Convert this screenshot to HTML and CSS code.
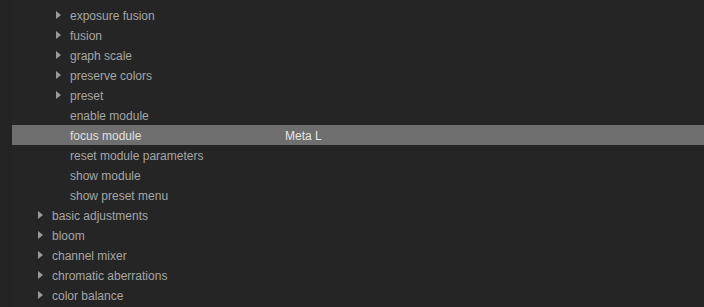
FILE: index.html
```html
<!DOCTYPE html>
<html>
<head>
<meta charset="utf-8">
<link rel="stylesheet" href="styles.css">
</head>
<body>
<div class="page">
  <div class="gutter"></div>
  <div class="tree">
    <div class="row l2"><span class="arrow"></span><span class="label">exposure fusion</span></div>
    <div class="row l2"><span class="arrow"></span><span class="label">fusion</span></div>
    <div class="row l2"><span class="arrow"></span><span class="label">graph scale</span></div>
    <div class="row l2"><span class="arrow"></span><span class="label">preserve colors</span></div>
    <div class="row l2"><span class="arrow"></span><span class="label">preset</span></div>
    <div class="row l2"><span class="noarrow"></span><span class="label">enable module</span></div>
    <div class="row l2 selected"><span class="noarrow"></span><span class="label">focus module</span><span class="key">Meta L</span></div>
    <div class="row l2"><span class="noarrow"></span><span class="label">reset module parameters</span></div>
    <div class="row l2"><span class="noarrow"></span><span class="label">show module</span></div>
    <div class="row l2"><span class="noarrow"></span><span class="label">show preset menu</span></div>
    <div class="row l1"><span class="arrow"></span><span class="label">basic adjustments</span></div>
    <div class="row l1"><span class="arrow"></span><span class="label">bloom</span></div>
    <div class="row l1"><span class="arrow"></span><span class="label">channel mixer</span></div>
    <div class="row l1"><span class="arrow"></span><span class="label">chromatic aberrations</span></div>
    <div class="row l1"><span class="arrow"></span><span class="label">color balance</span></div>
  </div>
</div>
</body>
</html>
```
FILE: styles.css
```css
html, body {
  margin: 0;
  padding: 0;
  background: #252525;
  height: 100%;
  overflow: hidden;
}
.page {
  display: flex;
  height: 307px;
  font-family: "Liberation Sans", Arial, sans-serif;
  font-size: 12px;
}
.gutter {
  width: 12px;
  background: #232323;
  flex: none;
}
.tree {
  flex: 1;
  padding-top: 5px;
}
.row {
  height: 20px;
  line-height: 20px;
  display: flex;
  align-items: center;
  color: #a6a6a6;
  white-space: nowrap;
}
.row.l2 { padding-left: 44px; }
.row.l1 { padding-left: 26px; }
.arrow, .noarrow {
  width: 14px;
  height: 20px;
  flex: none;
  position: relative;
}
.arrow::before {
  content: "";
  position: absolute;
  left: 0;
  top: 6px;
  border-left: 5px solid #9a9a9a;
  border-top: 4px solid transparent;
  border-bottom: 4px solid transparent;
}
.label {
  width: 215px;
  flex: none;
  padding-top: 1px;
}
.selected {
  background: #6e6e6e;
  color: #e0e0e0;
}
.key {
  color: #e6e6e6;
  padding-top: 1px;
}
```
